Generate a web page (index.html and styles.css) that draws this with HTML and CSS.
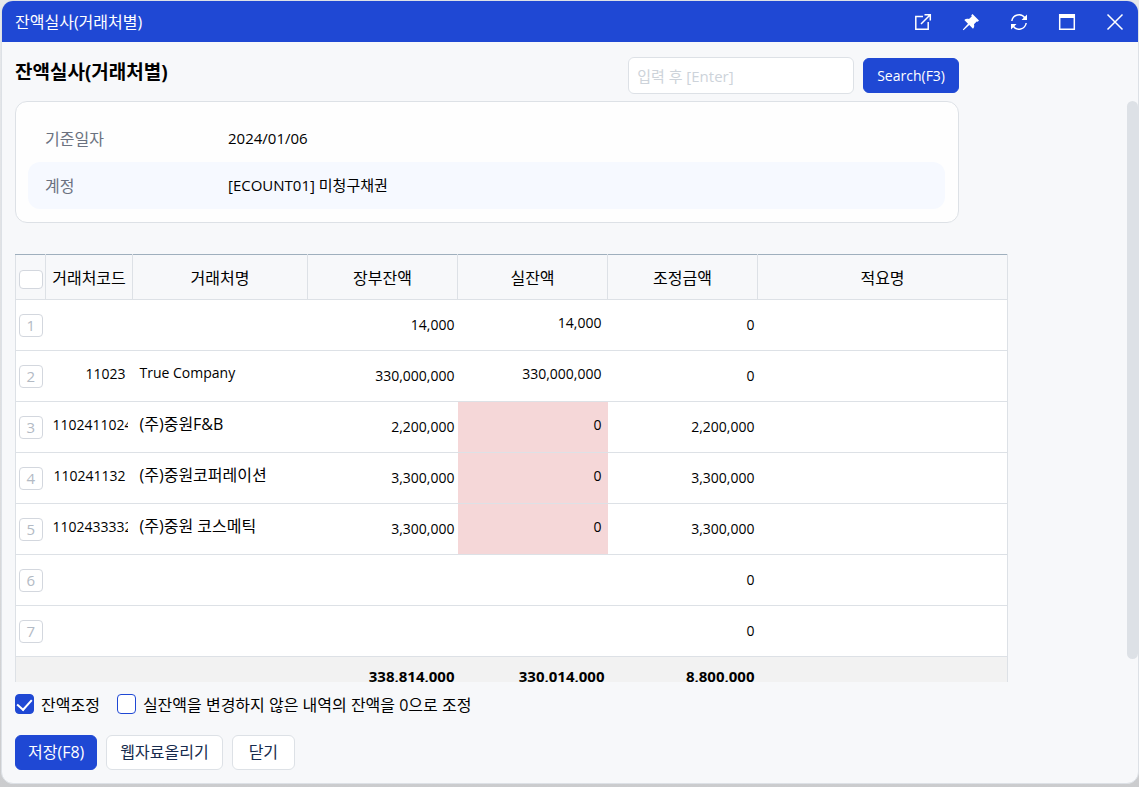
FILE: index.html
```html
<!DOCTYPE html>
<html lang="ko">
<head>
  <meta charset="UTF-8">
  <meta name="viewport" content="width=device-width, initial-scale=1.0">
  <title>잔액실사(거래처별)</title>
  <link rel="stylesheet" href="styles.css">
</head>
<body>
  <div class="window">
    <header class="titlebar">
      <span class="titlebar-text">잔액실사(거래처별)</span>
      <div class="titlebar-tools">
        <button type="button" aria-label="새 창">
          <svg viewBox="0 0 18 18" fill="none" stroke="#fff" stroke-width="1.5"><path d="M9 3.5H1.8v12.7h12.4V9M10.5 1.8h5.8v5.8M16 2L7 11"/></svg>
        </button>
        <button type="button" aria-label="고정">
          <svg viewBox="0 0 18 18" fill="#fff"><path d="M10.500 1l6.500 6.500-1.300 1.200-1-.2-2.700 2.800c.5 1.900.2 3.200-1 4.400L7.300 12 1.500 17.200l-.7-.7L6 10.700 2.300 7c1.200-1.200 2.900-1.500 4.700-1l2.700-2.600-.4-1.200z"/></svg>
        </button>
        <button type="button" aria-label="새로고침">
          <svg viewBox="0 0 18 18" fill="none" stroke="#fff" stroke-width="1.5"><path d="M1.800 8A7.300 7.300 0 0 1 15 5M16.200 10A7.300 7.300 0 0 1 3 13"/><path d="M17 1.500v5.500h-5.500zM1 16.500V11h5.500z" fill="#fff" stroke="none"/></svg>
        </button>
        <button type="button" aria-label="최대화">
          <svg viewBox="0 0 18 18" fill="none" stroke="#fff" stroke-width="1.5"><path d="M1.700 1.700h14.600v14.600H1.700z"/><path d="M1 1h16v4H1z" fill="#fff" stroke="none"/></svg>
        </button>
        <button type="button" aria-label="창 닫기">
          <svg viewBox="0 0 18 18" fill="none" stroke="#fff" stroke-width="1.5"><path d="M1.500 1.500l15 15M16.500 1.500l-15 15"/></svg>
        </button>
      </div>
    </header>

    <div class="page-head">
      <h1>잔액실사(거래처별)</h1>
      <form class="search">
        <input type="text" placeholder="입력 후 [Enter]" aria-label="검색어">
        <button type="button" class="btn btn-primary btn-search">Search(F3)</button>
      </form>
    </div>

    <div class="scroll-area">
      <main class="content">
        <dl class="summary">
          <div class="summary-row">
            <dt>기준일자</dt>
            <dd>2024/01/06</dd>
          </div>
          <div class="summary-row shaded">
            <dt>계정</dt>
            <dd>[ECOUNT01] 미청구채권</dd>
          </div>
        </dl>

        <table class="grid">
          <colgroup>
            <col class="col-no">
            <col class="col-code">
            <col class="col-name">
            <col class="col-amount">
            <col class="col-amount">
            <col class="col-amount">
            <col class="col-memo">
          </colgroup>
          <thead>
            <tr>
              <th><button type="button" class="row-no row-all" aria-label="전체 선택"></button></th>
              <th>거래처코드</th>
              <th>거래처명</th>
              <th>장부잔액</th>
              <th>실잔액</th>
              <th>조정금액</th>
              <th>적요명</th>
            </tr>
          </thead>
          <tbody>
            <tr>
              <td><button type="button" class="row-no">1</button></td>
              <td></td>
              <td></td>
              <td class="num">14,000</td>
              <td class="num edit">14,000</td>
              <td class="num">0</td>
              <td></td>
            </tr>
            <tr>
              <td><button type="button" class="row-no">2</button></td>
              <td class="code"><div>11023</div></td>
              <td class="name latin">True Company</td>
              <td class="num">330,000,000</td>
              <td class="num edit">330,000,000</td>
              <td class="num">0</td>
              <td></td>
            </tr>
            <tr>
              <td><button type="button" class="row-no">3</button></td>
              <td class="code"><div>1102411024</div></td>
              <td class="name">(주)중원F&amp;B</td>
              <td class="num">2,200,000</td>
              <td class="num edit diff">0</td>
              <td class="num">2,200,000</td>
              <td></td>
            </tr>
            <tr>
              <td><button type="button" class="row-no">4</button></td>
              <td class="code"><div>110241132</div></td>
              <td class="name">(주)중원코퍼레이션</td>
              <td class="num">3,300,000</td>
              <td class="num edit diff">0</td>
              <td class="num">3,300,000</td>
              <td></td>
            </tr>
            <tr>
              <td><button type="button" class="row-no">5</button></td>
              <td class="code"><div>1102433332</div></td>
              <td class="name">(주)중원 코스메틱</td>
              <td class="num">3,300,000</td>
              <td class="num edit diff">0</td>
              <td class="num">3,300,000</td>
              <td></td>
            </tr>
            <tr>
              <td><button type="button" class="row-no">6</button></td>
              <td></td>
              <td></td>
              <td></td>
              <td></td>
              <td class="num">0</td>
              <td></td>
            </tr>
            <tr>
              <td><button type="button" class="row-no">7</button></td>
              <td></td>
              <td></td>
              <td></td>
              <td></td>
              <td class="num">0</td>
              <td></td>
            </tr>
          </tbody>
          <tfoot>
            <tr>
              <td></td>
              <td></td>
              <td></td>
              <td class="num">338,814,000</td>
              <td class="num">330,014,000</td>
              <td class="num">8,800,000</td>
              <td></td>
            </tr>
          </tfoot>
        </table>
      </main>
      <div class="scrollbar"><div class="thumb"></div></div>
    </div>

    <footer class="footer">
      <div class="options">
        <label><input type="checkbox" checked>잔액조정</label>
        <label><input type="checkbox">실잔액을 변경하지 않은 내역의 잔액을 0으로 조정</label>
      </div>
      <div class="actions">
        <button type="button" class="btn btn-primary">저장(F8)</button>
        <button type="button" class="btn">웹자료올리기</button>
        <button type="button" class="btn btn-close">닫기</button>
      </div>
    </footer>
  </div>
</body>
</html>
```
FILE: styles.css
```css
* {
  box-sizing: border-box;
}

body {
  margin: 0;
  height: 100vh;
  padding: 0 0 3px 1px;
  overflow: hidden;
  background: linear-gradient(#e6e8eb, #dcdddf 60%, #cbccce);
  font-family: "Open Sans", "Noto Sans CJK KR", sans-serif;
  font-size: 16px;
  color: #000;
}

button, input {
  font-family: inherit;
}

.window {
  display: flex;
  flex-direction: column;
  height: 100%;
  border: 1px solid #dde1e6;
  border-radius: 12px;
  background: #f7f8fa;
  overflow: hidden;
}

.titlebar {
  display: flex;
  align-items: center;
  justify-content: space-between;
  flex: none;
  height: 41px;
  padding: 0 14px 0 13px;
  background: #1f48d4;
  color: #fff;
}

.titlebar-text {
  padding-bottom: 2px;
}

.titlebar-tools {
  display: flex;
  gap: 30px;
}

.titlebar-tools button {
  display: flex;
  width: 18px;
  height: 18px;
  padding: 0;
  border: 0;
  background: none;
  cursor: pointer;
}

.page-head {
  display: flex;
  align-items: center;
  justify-content: space-between;
  flex: none;
  height: 59px;
  max-width: 957px;
  padding: 8px 0 0 13px;
}

.page-head h1 {
  margin: 0 0 8px;
  font-size: 19px;
  line-height: 24px;
}

.search {
  display: flex;
  align-items: center;
  gap: 9px;
}

.search input {
  width: 226px;
  height: 37px;
  padding: 0 8px;
  border: 1px solid #dde1e6;
  border-radius: 6px;
  background: #fff;
  font-size: 15px;
}

.search input::placeholder {
  color: #cdd3da;
}

.btn {
  height: 35px;
  padding: 0 13px 2px;
  border: 1px solid #dde1e6;
  border-radius: 6px;
  background: #fff;
  color: #172b4d;
  font-size: 16px;
  line-height: 20px;
  cursor: pointer;
}

.btn-primary {
  padding: 0 12px 2px;
  border-color: #1f48d4;
  background: #1f48d4;
  color: #fff;
}

.btn-search {
  padding: 0 13px;
  font-size: 14px;
}

.btn-close {
  padding: 0 16px 2px;
}

.scroll-area {
  display: flex;
  flex: 1;
  min-height: 0;
}

.content {
  flex: 1;
  min-width: 0;
  padding: 0 13px;
  overflow: hidden;
}

.scrollbar {
  width: 11px;
}

.thumb {
  height: 96%;
  border-radius: 6px;
  background: #dde1e6;
}

.summary {
  max-width: 944px;
  margin: 0 0 31px;
  padding: 13px 13px 13px 12px;
  border: 1px solid #dde1e6;
  border-radius: 12px;
  background: #fefefe;
}

.summary-row {
  display: flex;
  align-items: center;
  height: 47px;
  padding: 0 17px 2px;
  border-radius: 12px;
}

.summary-row.shaded {
  background: #f6f9ff;
}

.summary dt {
  width: 183px;
  color: #6b7280;
}

.summary dd {
  margin: 0;
  font-size: 15px;
}

.grid {
  table-layout: fixed;
  width: 993px;
  border-collapse: collapse;
  border: 1px solid #dde1e6;
  border-top: 1px solid #9fafbd;
  background: #fff;
}

.col-no {
  width: 30px;
}

.col-code {
  width: 87px;
}

.col-name {
  width: 175px;
}

.col-amount {
  width: 150px;
}

.col-memo {
  width: 250px;
}

.grid th {
  height: 45px;
  padding: 0;
  border: 1px solid #dde1e6;
  border-top-color: #9fafbd;
  background: #f7f8fa;
  font-weight: normal;
  white-space: nowrap;
}

.grid td {
  height: 51px;
  padding: 0;
  border-bottom: 1px solid #dde1e6;
  font-size: 14px;
  line-height: 20px;
  white-space: nowrap;
}

.grid .num {
  padding-right: 3px;
  text-align: right;
}

.grid .edit {
  padding: 0 6px 4px;
}

.grid .diff {
  background: #f5d7d8;
}

/* long codes are cut at the cell edge */
.grid .code {
  padding: 0 5px 5px 7px;
}

.code div {
  padding-right: 2px;
  overflow: hidden;
  text-align: right;
}

.grid .name {
  padding: 0 7px 6px;
  font-size: 16px;
}

.grid .latin {
  font-size: 14px;
}

.grid tfoot td {
  height: 38px;
  background: #f2f2f2;
  font-size: 15px;
  font-weight: bold;
}

.row-no {
  display: block;
  width: 24px;
  height: 23px;
  margin: 0 auto;
  padding: 0;
  border: 1px solid #d3d7de;
  border-radius: 4px;
  background: #fff;
  color: #b3bac4;
  font-size: 15px;
  line-height: 20px;
}

.row-all {
  height: 19px;
  margin-top: 4px;
}

.footer {
  flex: none;
  padding: 10px 13px 13px;
}

.options {
  display: flex;
  gap: 17px;
  height: 24px;
}

.options label {
  display: flex;
  align-items: center;
  gap: 7px;
}

.options input {
  appearance: none;
  display: flex;
  justify-content: center;
  width: 19px;
  height: 20px;
  margin: 0;
  border: 1px solid #1f48d4;
  border-radius: 4px;
  background: #fff;
}

.options input:checked {
  background: #1f48d4;
}

.options input:checked::after {
  content: "";
  width: 7px;
  height: 12px;
  margin-top: 1px;
  border: solid #fff;
  border-width: 0 2px 2px 0;
  transform: rotate(42deg);
}

.actions {
  display: flex;
  gap: 9px;
  margin-top: 19px;
}
```
